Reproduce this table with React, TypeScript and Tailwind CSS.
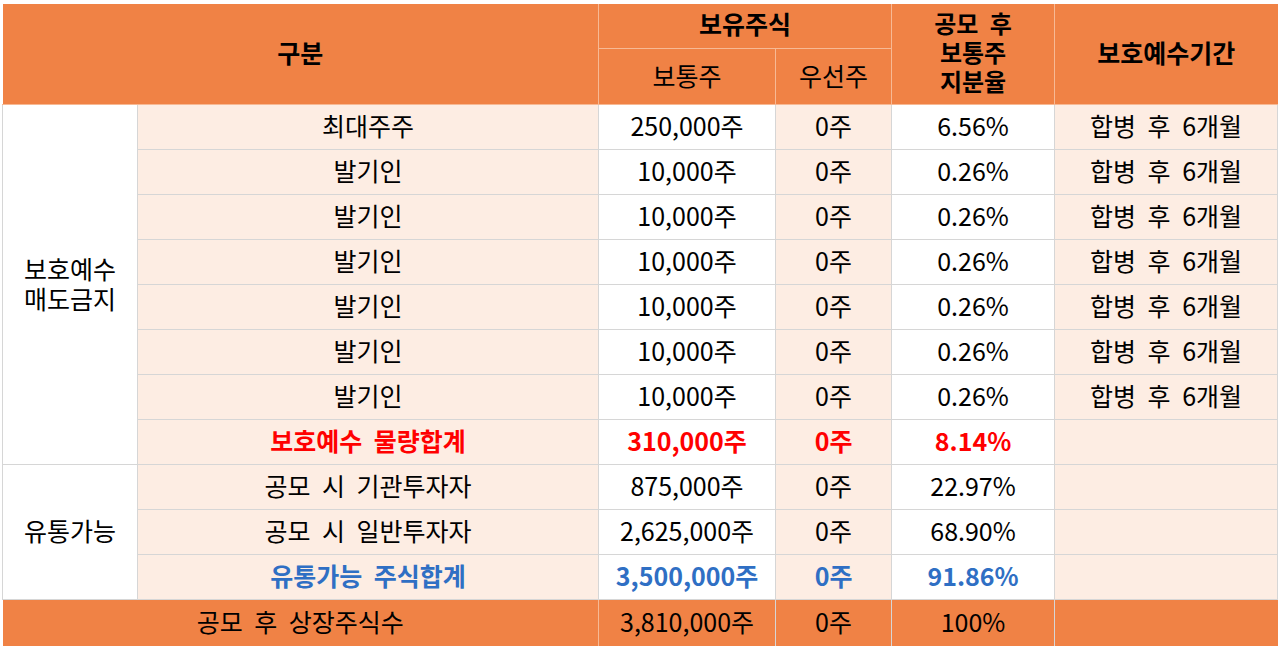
import React from "react";

const font = { fontFamily: '"Noto Sans CJK KR", "Noto Sans", sans-serif', wordSpacing: "6px" };

type Row = { name: string; common: string; pref: string; ratio: string; period: string; kind?: "red" | "blue" };

const lockRows: Row[] = [
  { name: "최대주주", common: "250,000주", pref: "0주", ratio: "6.56%", period: "합병 후 6개월" },
  { name: "발기인", common: "10,000주", pref: "0주", ratio: "0.26%", period: "합병 후 6개월" },
  { name: "발기인", common: "10,000주", pref: "0주", ratio: "0.26%", period: "합병 후 6개월" },
  { name: "발기인", common: "10,000주", pref: "0주", ratio: "0.26%", period: "합병 후 6개월" },
  { name: "발기인", common: "10,000주", pref: "0주", ratio: "0.26%", period: "합병 후 6개월" },
  { name: "발기인", common: "10,000주", pref: "0주", ratio: "0.26%", period: "합병 후 6개월" },
  { name: "발기인", common: "10,000주", pref: "0주", ratio: "0.26%", period: "합병 후 6개월" },
  { name: "보호예수 물량합계", common: "310,000주", pref: "0주", ratio: "8.14%", period: "", kind: "red" },
];

const freeRows: Row[] = [
  { name: "공모 시 기관투자자", common: "875,000주", pref: "0주", ratio: "22.97%", period: "" },
  { name: "공모 시 일반투자자", common: "2,625,000주", pref: "0주", ratio: "68.90%", period: "" },
  { name: "유통가능 주식합계", common: "3,500,000주", pref: "0주", ratio: "91.86%", period: "", kind: "blue" },
];

function BodyRow({ r, first, label, span }: { r: Row; first?: boolean; label?: React.ReactNode; span?: number }) {
  const tone =
    r.kind === "red" ? "text-[#ff0000] font-bold" : r.kind === "blue" ? "text-[#2f6fc4] font-bold" : "text-black";
  const cell = "border border-[#d6d6d6] text-center align-middle p-0 pb-[3px]";
  return (
    <tr className="h-[45px]">
      {first && (
        <td rowSpan={span} className={`${cell} bg-white text-black leading-[30px]`}>
          {label}
        </td>
      )}
      <td className={`${cell} bg-[#fdede3] ${tone}`}>{r.name}</td>
      <td className={`${cell} bg-white ${tone}`}>{r.common}</td>
      <td className={`${cell} bg-[#fdede3] ${tone}`}>{r.pref}</td>
      <td className={`${cell} bg-white ${tone}`}>{r.ratio}</td>
      <td className={`${cell} bg-[#fdede3] text-black`}>{r.period}</td>
    </tr>
  );
}

export default function App() {
  const hcell = "border border-[#f7b994] text-center align-middle p-0 font-bold text-black";
  const fcell = "border border-[#d6d6d6] border-b-0 text-center align-middle p-0 pb-[3px] text-black";
  return (
    <div className="w-[1280px] h-[652px] bg-white pt-[4px] pl-[2px]" style={font}>
      <table className="table-fixed border-collapse w-[1275px] text-[25px] leading-[30px]">
        <colgroup>
          <col className="w-[135px]" />
          <col className="w-[461px]" />
          <col className="w-[177px]" />
          <col className="w-[116px]" />
          <col className="w-[163px]" />
          <col className="w-[223px]" />
        </colgroup>
        <thead className="bg-[#f08245]">
          <tr className="h-[44px]">
            <th colSpan={2} rowSpan={2} className={`${hcell} border-t-0 border-l-0 pb-[3px]`}>
              구분
            </th>
            <th colSpan={2} className={`${hcell} border-t-0 pb-[6px]`}>
              보유주식
            </th>
            <th rowSpan={2} className={`${hcell} border-t-0 leading-[29px] text-[24px] pb-[4px]`}>
              공모 후
              <br />
              보통주
              <br />
              지분율
            </th>
            <th rowSpan={2} className={`${hcell} border-t-0 border-r-0 pb-[3px]`}>
              보호예수기간
            </th>
          </tr>
          <tr className="h-[56px]">
            <th className={`${hcell} font-normal pb-[2px]`}>보통주</th>
            <th className={`${hcell} font-normal pb-[2px]`}>우선주</th>
          </tr>
        </thead>
        <tbody>
          {lockRows.map((r, i) => (
            <BodyRow
              key={"l" + i}
              r={r}
              first={i === 0}
              span={lockRows.length}
              label={
                <>
                  보호예수
                  <br />
                  매도금지
                </>
              }
            />
          ))}
          {freeRows.map((r, i) => (
            <BodyRow key={"f" + i} r={r} first={i === 0} span={freeRows.length} label="유통가능" />
          ))}
          <tr className="h-[47px] bg-[#f08245]">
            <td colSpan={2} className="border border-[#f7b994] border-l-0 border-b-0 text-center align-middle p-0 pb-[3px] text-black">
              공모 후 상장주식수
            </td>
            <td className={fcell}>3,810,000주</td>
            <td className={fcell}>0주</td>
            <td className={fcell}>100%</td>
            <td className={`${fcell} border-r-0`}></td>
          </tr>
        </tbody>
      </table>
    </div>
  );
}
